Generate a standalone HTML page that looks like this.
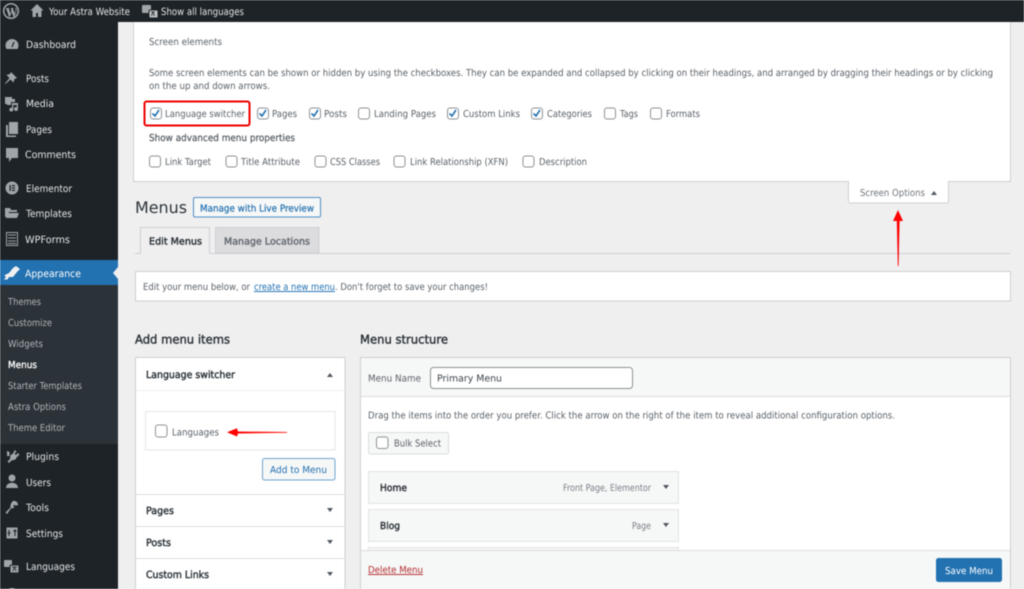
<!DOCTYPE html>
<html lang="en"><head><meta charset="utf-8"><title>Menus</title>
<style>
html,body{margin:0;padding:0;width:1024px;height:589px;overflow:hidden;background:#efeff0}
svg{display:block;filter:blur(.4px)}
text{font-family:"DejaVu Sans",sans-serif;font-size:9.6px;fill:#5a6168;white-space:pre;text-rendering:geometricPrecision}
.s text{fill:#e4e6e8;font-size:10px}
.u text{fill:#b0b5ba;font-size:9.6px}
.b{fill:#2c3338;stroke:#2c3338;stroke-width:.42}
.i{fill:#a0a5aa}
.c{fill:#fff;stroke:#8c8f94;stroke-width:1}
.k{fill:none;stroke:#2271b1;stroke-width:1.6}
</style></head><body>
<svg width="1024" height="589" viewBox="0 0 1024 589" xmlns="http://www.w3.org/2000/svg">
<rect width="1024" height="589" fill="#efeff0"/>
<!-- screen options panel -->
<rect x="133.500" y="15" width="877" height="166.500" fill="#fff" stroke="#cfcfd1"/>
<path d="M848.500 181v20a2 2 0 0 0 2 2h96a2 2 0 0 0 2-2v-20" fill="#fff" stroke="#cfcfd1"/>
<rect x="849" y="180" width="99" height="2" fill="#fff"/>
<!-- sidebar -->
<rect width="118" height="589" fill="#1d2327"/>
<rect y="285" width="118" height="159" fill="#2c3338"/>
<rect y="260" width="118" height="25" fill="#2271b1"/>
<path d="M118 267l-5 6 5 6z" fill="#efeff0"/>
<rect width="1024" height="22" fill="#1d2327"/>
<!-- admin bar icons -->
<circle cx="11" cy="11" r="7.300" fill="none" stroke="#a0a5aa" stroke-width="1.500"/>
<path class="i" d="M6 8h3.500l-.7.6 1.700 5 1-3-.8-2.600h3l-.7.6 1.700 5 1-2.800c.3-1-.2-2-.5-2.800h1.200c.6 2.500-.5 5-2 8.800h-.9l-1.800-4.500-1.800 4.500h-.9z"/>
<path d="M37 4l-6.500 6.500h2V17h3.500v-4h2v4H41.500v-6.500h2z" fill="#a0a5aa"/>
<rect x="142" y="5" width="9" height="8" rx="1" fill="#a0a5aa"/><rect x="149" y="10" width="9" height="8" rx="1" fill="#c3c4c7" stroke="#1d2327"/>
<path d="M151 12h4M153 12l-1.500 4M153 12l1.500 4" stroke="#1d2327" fill="none" stroke-width=".8"/>
<g class="s">
<text x="49" y="15" textLength="81" lengthAdjust="spacingAndGlyphs">Your Astra Website</text>
<text x="161" y="15" textLength="83" lengthAdjust="spacingAndGlyphs">Show all languages</text>
<text x="26" y="48" textLength="50" lengthAdjust="spacingAndGlyphs">Dashboard</text>
<text x="26" y="82" textLength="23" lengthAdjust="spacingAndGlyphs">Posts</text>
<text x="26" y="107" textLength="28" lengthAdjust="spacingAndGlyphs">Media</text>
<text x="26" y="133" textLength="26" lengthAdjust="spacingAndGlyphs">Pages</text>
<text x="25" y="158" textLength="51" lengthAdjust="spacingAndGlyphs">Comments</text>
<text x="26" y="192" textLength="46" lengthAdjust="spacingAndGlyphs">Elementor</text>
<text x="26" y="217" textLength="46" lengthAdjust="spacingAndGlyphs">Templates</text>
<text x="25" y="243" textLength="45" lengthAdjust="spacingAndGlyphs">WPForms</text>
<text x="25" y="277" textLength="56" lengthAdjust="spacingAndGlyphs" style="fill:#fff">Appearance</text>
<text x="26" y="460" textLength="33" lengthAdjust="spacingAndGlyphs">Plugins</text>
<text x="26" y="486" textLength="25" lengthAdjust="spacingAndGlyphs">Users</text>
<text x="26" y="511" textLength="23" lengthAdjust="spacingAndGlyphs">Tools</text>
<text x="26" y="537" textLength="37" lengthAdjust="spacingAndGlyphs">Settings</text>
<text x="26" y="570" textLength="49" lengthAdjust="spacingAndGlyphs">Languages</text>
</g>
<g class="u">
<text x="8" y="305" textLength="33" lengthAdjust="spacingAndGlyphs">Themes</text>
<text x="8" y="326" textLength="44" lengthAdjust="spacingAndGlyphs">Customize</text>
<text x="8" y="347" textLength="35" lengthAdjust="spacingAndGlyphs">Widgets</text>
<text x="8" y="368" textLength="29" lengthAdjust="spacingAndGlyphs" style="fill:#fff;stroke:#fff;stroke-width:.3">Menus</text>
<text x="8" y="389" textLength="74" lengthAdjust="spacingAndGlyphs">Starter Templates</text>
<text x="8" y="410" textLength="58" lengthAdjust="spacingAndGlyphs">Astra Options</text>
<text x="8" y="431" textLength="57" lengthAdjust="spacingAndGlyphs">Theme Editor</text>
</g>
<!-- sidebar icons -->
<path class="i" d="M6.500 49a6.500 6.500 0 1 1 11 0z"/><path d="M12 47l2-5" stroke="#1d2327" stroke-width="1.200"/>
<path class="i" d="M11 72l6 6-2.500 1-1 3.500-3-3-5 4.500-.5-.5L9.500 78l-3-3 3.500-1z"/>
<path class="i" d="M5 97h7v2h3v3h-4v3H7v-1H5zM12 103h6v6a2 2 0 1 1-1.200-1.800V105h-3.500v4.500a2 2 0 1 1-1.300-1.800z"/>
<path class="i" d="M9 122h9v12H9z"/><path class="i" d="M6 125h2v10.500h8V137H6z"/>
<path class="i" d="M6 148h12v10h-6l-3 4v-4H6z"/>
<circle class="i" cx="12" cy="188" r="6.500"/><path d="M9.500 185h1.300v6H9.500zM12 185h3v1.200h-3zM12 187.400h3v1.200h-3zM12 189.800h3v1.200h-3z" fill="#1d2327"/>
<path class="i" d="M5 208h5l1 2h6v2H9l-2 5H5zM8 213h11l-2 5H6z"/>
<rect x="6.500" y="232.500" width="11" height="13" fill="none" stroke="#a0a5aa"/><path d="M8 235h8M8 238h8M8 241h8M8 243.500h8" stroke="#a0a5aa"/>
<path d="M5 275l4-2 4-5 3-2 4 3-3 3-4 5-4 0-1.500 2.500H4l2-2.500-1.500-1z" fill="#f0f0f1"/>
<path class="i" d="M15 450l1.500 1.500-2 2 1.500 1.500 2-2 1.500 1.500-3 3-1 2-4 1-2.500 2.500-1.500-1.500 2.500-2.500.5-4 2-1z"/><path class="i" d="M7 451l2.500 1v4H7z"/>
<circle class="i" cx="12" cy="478" r="3.500"/><path class="i" d="M6 488c0-7 12-7 12 0z"/>
<path class="i" d="M13 501a4 4 0 0 1 5 4l-2.500.7-1.200-1.200-1 2 1 1c-1 1-2 1-3 .5L7 514l-1.500-1.500 5-5c-.5-2 .5-5 2.500-6.500z"/>
<rect class="i" x="6.500" y="527.500" width="11" height="11"/><path d="M9 530v6M7.500 533h3M15 536v-6M13.500 531.500l1.500-1.500 1.500 1.500" stroke="#1d2327" fill="none"/>
<rect class="i" x="4" y="560" width="8" height="7" rx="1"/><rect x="10" y="565" width="9" height="8" rx="1" fill="#a0a5aa" stroke="#1d2327"/>
<path d="M12 567h5M14.500 567l-1.500 4M14.500 567l1.500 4" stroke="#1d2327" fill="none" stroke-width=".8"/>
<circle class="i" cx="12" cy="595" r="7"/>
<text x="860" y="196" textLength="65" lengthAdjust="spacingAndGlyphs" style="fill:#6f757b">Screen Options</text>
<path d="M931 195l3-4 3 4z" fill="#50575e"/>
<text x="149" y="45" textLength="73" lengthAdjust="spacingAndGlyphs">Screen elements</text>
<text x="149" y="76" textLength="844" lengthAdjust="spacingAndGlyphs">Some screen elements can be shown or hidden by using the checkboxes. They can be expanded and collapsed by clicking on their headings, and arranged by dragging their headings or by clicking</text>
<text x="149" y="89" textLength="121" lengthAdjust="spacingAndGlyphs">on the up and down arrows.</text>
<!-- row 1 -->
<rect class="c" x="150.500" y="108" width="11" height="11" rx="2.500"/><path class="k" d="M152.500 113.500l2.500 2.500 4-6"/>
<text x="165" y="117" textLength="80" lengthAdjust="spacingAndGlyphs">Language switcher</text>
<rect class="c" x="257.500" y="108" width="11" height="11" rx="2.500"/><path class="k" d="M259.500 113.500l2.500 2.500 4-6"/>
<text x="272" y="117" textLength="25" lengthAdjust="spacingAndGlyphs">Pages</text>
<rect class="c" x="309.500" y="108" width="11" height="11" rx="2.500"/><path class="k" d="M311.500 113.500l2.500 2.500 4-6"/>
<text x="324" y="117" textLength="23" lengthAdjust="spacingAndGlyphs">Posts</text>
<rect class="c" x="358.500" y="108" width="11" height="11" rx="2.500"/>
<text x="374" y="117" textLength="62" lengthAdjust="spacingAndGlyphs">Landing Pages</text>
<rect class="c" x="447.500" y="108" width="11" height="11" rx="2.500"/><path class="k" d="M449.500 113.500l2.500 2.500 4-6"/>
<text x="463" y="117" textLength="57" lengthAdjust="spacingAndGlyphs">Custom Links</text>
<rect class="c" x="531.500" y="108" width="11" height="11" rx="2.500"/><path class="k" d="M533.500 113.500l2.500 2.500 4-6"/>
<text x="547" y="117" textLength="45" lengthAdjust="spacingAndGlyphs">Categories</text>
<rect class="c" x="604.500" y="108" width="11" height="11" rx="2.500"/>
<text x="620" y="117" textLength="18" lengthAdjust="spacingAndGlyphs">Tags</text>
<rect class="c" x="650.500" y="108" width="11" height="11" rx="2.500"/>
<text x="666" y="117" textLength="34" lengthAdjust="spacingAndGlyphs">Formats</text>
<rect x="144.500" y="101.500" width="105" height="24" rx="2" fill="none" stroke="#ee0000" stroke-width="2"/>
<text x="149" y="141" textLength="146" lengthAdjust="spacingAndGlyphs" style="fill:#50575e;stroke:#50575e;stroke-width:.2">Show advanced menu properties</text>
<!-- row 2 -->
<rect class="c" x="149.500" y="156" width="11" height="11" rx="2.500"/>
<text x="165" y="165" textLength="46" lengthAdjust="spacingAndGlyphs">Link Target</text>
<rect class="c" x="226" y="156" width="11" height="11" rx="2.500"/>
<text x="241" y="165" textLength="59" lengthAdjust="spacingAndGlyphs">Title Attribute</text>
<rect class="c" x="315" y="156" width="11" height="11" rx="2.500"/>
<text x="330" y="165" textLength="50" lengthAdjust="spacingAndGlyphs">CSS Classes</text>
<rect class="c" x="394" y="156" width="11" height="11" rx="2.500"/>
<text x="410" y="165" textLength="98" lengthAdjust="spacingAndGlyphs">Link Relationship (XFN)</text>
<rect class="c" x="523" y="156" width="11" height="11" rx="2.500"/>
<text x="539" y="165" textLength="48" lengthAdjust="spacingAndGlyphs">Description</text>
<!-- heading -->
<text x="135" y="213" textLength="52" lengthAdjust="spacingAndGlyphs" style="font-size:16px;fill:#2c3338">Menus</text>
<rect x="193.500" y="197.500" width="127" height="19.500" rx="1.500" fill="#f6f7f7" stroke="#4f8fc4"/>
<text x="200" y="211.500" textLength="114" lengthAdjust="spacingAndGlyphs" style="fill:#2271b1;stroke:#2271b1;stroke-width:.2">Manage with Live Preview</text>
<!-- tabs -->
<path d="M135 253.500H1010" stroke="#cfcfd1"/>
<path d="M140.500 254v-26.500h69V254" fill="#efeff0" stroke="#cfcfd1"/>
<path d="M215.500 253v-25.500h103.500V253z" fill="#dcdcde" stroke="#cfcfd1"/>
<text x="149" y="244.500" textLength="53" lengthAdjust="spacingAndGlyphs" class="b">Edit Menus</text>
<text x="224" y="244.500" textLength="86" lengthAdjust="spacingAndGlyphs" style="fill:#646970;stroke:#646970;stroke-width:.4">Manage Locations</text>
<!-- notice -->
<rect x="135.500" y="271.500" width="875" height="29.500" fill="#fff" stroke="#cfcfd1"/>
<text x="143" y="290" textLength="107" lengthAdjust="spacingAndGlyphs">Edit your menu below, or</text>
<text x="254" y="290" textLength="81" lengthAdjust="spacingAndGlyphs" style="fill:#2271b1;text-decoration:underline">create a new menu</text>
<text x="335" y="290" textLength="153" lengthAdjust="spacingAndGlyphs">. Don't forget to save your changes!</text>
<!-- red arrow up -->
<path d="M896.800 221h2.800l-1 45h-.8z" fill="#f00"/><path d="M893 221l5-11 5 11z" fill="#f00"/>
<!-- left col -->
<text x="135" y="343.500" textLength="95" lengthAdjust="spacingAndGlyphs" class="b" style="font-size:12px">Add menu items</text>
<text x="360" y="343.500" textLength="88" lengthAdjust="spacingAndGlyphs" class="b" style="font-size:12px">Menu structure</text>
<rect x="135.500" y="357.500" width="209.500" height="240" fill="#fff" stroke="#cfcfd1"/>
<path d="M136 390.500H345" stroke="#efeff0"/>
<text x="146" y="378" textLength="89" lengthAdjust="spacingAndGlyphs" class="b" style="font-size:10px">Language switcher</text>
<path d="M327 377l3-4 3 4z" fill="#50575e"/>
<rect x="145.500" y="411.500" width="189.500" height="38.500" fill="#fff" stroke="#e4e5e7"/>
<rect class="c" x="155.500" y="425" width="11.500" height="12" rx="2.500"/>
<text x="172" y="435.500" textLength="47" lengthAdjust="spacingAndGlyphs">Languages</text>
<path d="M227 432.300l10-4 1 3.200 49 .5v.7l-49 .8-1 3z" fill="#f00"/>
<rect x="262.500" y="458.500" width="72.500" height="21.500" rx="2" fill="#f6f7f7" stroke="#6ea3cf"/>
<text x="270" y="473" textLength="57" lengthAdjust="spacingAndGlyphs" style="fill:#2271b1">Add to Menu</text>
<path d="M136 494.500H345M136 526.500H345M136 558.500H345" stroke="#dcdcde"/>
<text x="146" y="514" textLength="28" lengthAdjust="spacingAndGlyphs" class="b" style="font-size:10px">Pages</text>
<text x="146" y="546" textLength="25" lengthAdjust="spacingAndGlyphs" class="b" style="font-size:10px">Posts</text>
<text x="146" y="578" textLength="63" lengthAdjust="spacingAndGlyphs" class="b" style="font-size:10px">Custom Links</text>
<path d="M327 508l3 4 3-4zM327 540l3 4 3-4zM327 572l3 4 3-4z" fill="#50575e"/>
<!-- right col -->
<rect x="360.500" y="357.500" width="650" height="240" fill="#fff" stroke="#cfcfd1"/>
<rect x="361" y="358" width="649" height="38" fill="#f6f7f7"/>
<path d="M361 396.500H1010" stroke="#dcdcde"/>
<text x="368" y="381.500" textLength="53" lengthAdjust="spacingAndGlyphs">Menu Name</text>
<rect x="430.500" y="367.500" width="202" height="21" rx="3" fill="#fff" stroke="#8c8f94"/>
<text x="437" y="381.500" textLength="65" lengthAdjust="spacingAndGlyphs" style="fill:#3c434a">Primary Menu</text>
<text x="368" y="418.500" textLength="527" lengthAdjust="spacingAndGlyphs">Drag the items into the order you prefer. Click the arrow on the right of the item to reveal additional configuration options.</text>
<rect x="368.500" y="432.500" width="80" height="21.500" rx="2" fill="#f6f7f7" stroke="#dcdcde"/>
<rect class="c" x="376.500" y="437" width="11.500" height="11.500" rx="2.500"/>
<text x="394" y="446.500" textLength="47" lengthAdjust="spacingAndGlyphs">Bulk Select</text>
<rect x="368.500" y="471.500" width="310" height="32" fill="#f6f7f7" stroke="#e2e3e5"/>
<text x="380" y="491" textLength="27" lengthAdjust="spacingAndGlyphs" class="b">Home</text>
<text x="563" y="491" textLength="88" lengthAdjust="spacingAndGlyphs" style="fill:#7a8086">Front Page, Elementor</text>
<path d="M663 485l3 4 3-4z" fill="#50575e"/>
<rect x="368.500" y="509.500" width="310" height="32" fill="#f6f7f7" stroke="#e2e3e5"/>
<text x="380" y="529" textLength="20" lengthAdjust="spacingAndGlyphs" class="b">Blog</text>
<text x="632" y="529" textLength="19" lengthAdjust="spacingAndGlyphs" style="fill:#7a8086">Page</text>
<path d="M663 523l3 4 3-4z" fill="#50575e"/>
<rect x="368.500" y="547.500" width="310" height="32" fill="#f6f7f7" stroke="#e2e3e5"/>
<rect x="361" y="550" width="649" height="39" fill="#f6f7f7"/>
<path d="M361 550.500H1010" stroke="#dcdcde"/>
<text x="368" y="573" textLength="55" lengthAdjust="spacingAndGlyphs" style="fill:#b32d2e;text-decoration:underline">Delete Menu</text>
<rect x="936" y="558" width="66" height="24" rx="2.500" fill="#2271b1"/>
<text x="945" y="574" textLength="48" lengthAdjust="spacingAndGlyphs" style="fill:#fff">Save Menu</text>
</svg>
</body></html>
